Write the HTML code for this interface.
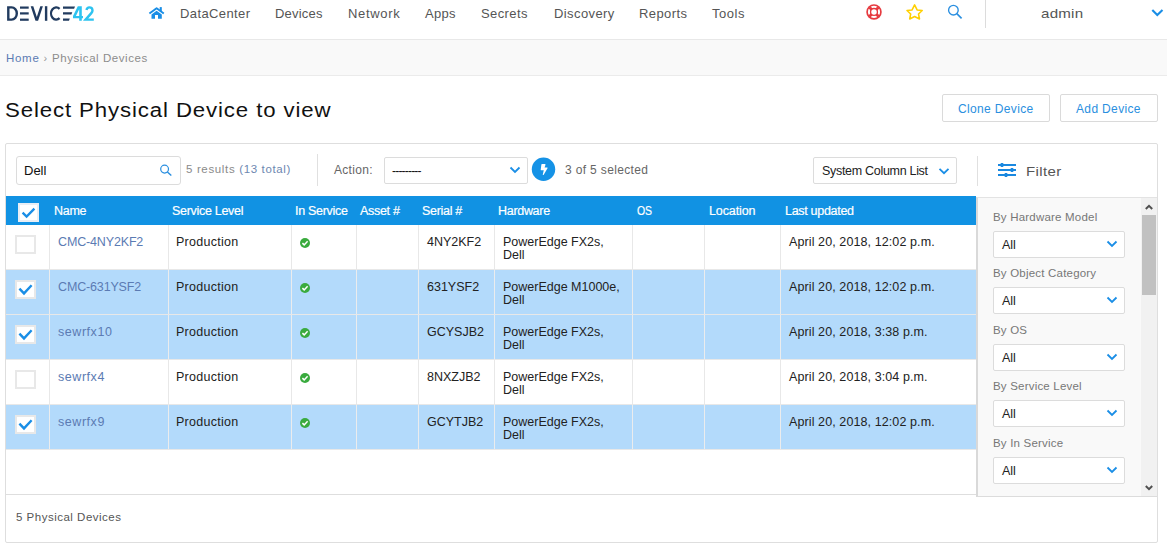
<!DOCTYPE html>
<html><head><meta charset="utf-8"><title>Physical Devices</title>
<style>
*{margin:0;padding:0;box-sizing:border-box}
html,body{width:1167px;height:549px;overflow:hidden;background:#fff;font-family:"Liberation Sans",sans-serif;color:#333}
.a{position:absolute;white-space:nowrap;line-height:16px}
.ln{position:absolute;background:#e6e6e6}
.nav{font-size:13px;color:#555;top:6px;letter-spacing:0.4px}
.cb{position:absolute;width:21px;height:19px;border:2px solid #e8e8e8;background:#fff}
.sel{position:absolute;background:#fff;border:1px solid #dcdcdc;border-radius:2px}
.flbl{font-size:11.5px;color:#777;letter-spacing:0.2px}
.th{font-size:12.5px;color:#fff;top:203px;letter-spacing:-0.3px;-webkit-text-stroke:0.2px #fff}
.td{font-size:12.5px;color:#222}
.nm{color:#5b7bb3;letter-spacing:-0.15px}
.pr{letter-spacing:0.27px}
.fall{font-size:12.5px;color:#222}
</style></head><body>

<!-- ============ HEADER ============ -->
<div class="ln" style="left:0;top:39px;width:1167px;height:1px;background:#e8e8e8"></div>
<svg class="a" style="left:0;top:0" width="100" height="30" viewBox="0 0 100 30">
  <g fill="#213b5f">
    <path d="M7.1 6.2 H11.6 A6.4 7.3 0 0 1 11.6 20.8 H7.1 Z M9.5 8.6 V18.4 H11.6 A4 4.9 0 0 0 11.6 8.6 Z" fill-rule="evenodd"/>
    <rect x="20" y="6.5" width="8.7" height="2.2"/><rect x="20" y="12.3" width="8.7" height="2.2"/><rect x="20" y="18.6" width="8.7" height="2.2"/>
    <path d="M30.7 6.2 H33.3 L36.8 16.9 L40.3 6.2 H42.9 L38.1 20.8 H35.5 Z"/>
    <rect x="44.9" y="6.2" width="2.4" height="14.6"/>
    <path d="M63 6.5 H75 L74.1 8.7 H63 Z M63 12.2 H72.3 L71.4 14.4 H63 Z M63 18.6 H69.8 L69 20.8 H63 Z"/>
  </g>
  <path d="M59.6 8.8 A5.2 6.1 0 1 0 59.6 18.2" fill="none" stroke="#213b5f" stroke-width="2.3"/>
  <g fill="#2dc3f0">
    <path d="M77.8 6.2 H81.8 V16.1 H83 V18.3 H81.8 V20.8 H79.2 V18.3 H73 V16.1 Z M79.2 9.3 V16.1 H75.9 Z" fill-rule="evenodd"/>
  </g>
  <path d="M86.5 10 C86.9 7.9 88.3 7.4 89.3 7.4 C91.2 7.4 92.5 8.6 92.5 10.5 C92.5 11.6 92 12.3 91.3 13.1 L85.6 19.6 H93.8" fill="none" stroke="#2dc3f0" stroke-width="2.4"/>
</svg>
<svg class="a" style="left:148px;top:6px" width="17" height="14" viewBox="0 0 17 14">
  <path d="M1.4 7.6 L8.6 2.2 L15.8 7.6" fill="none" stroke="#1a8ee6" stroke-width="1.9" stroke-linejoin="round"/>
  <rect x="11.7" y="1.1" width="2.1" height="4.2" fill="#1a8ee6"/>
  <path d="M3.5 8.6 L8.6 4.8 L13.8 8.6 V12.8 H10 V9 H7 V12.8 H3.5 Z" fill="#1a8ee6"/>
</svg>
<div class="a nav" style="left:180px">DataCenter</div>
<div class="a nav" style="left:275px;letter-spacing:0.2px">Devices</div>
<div class="a nav" style="left:348px;letter-spacing:0.68px">Network</div>
<div class="a nav" style="left:425px;letter-spacing:0.3px">Apps</div>
<div class="a nav" style="left:481px">Secrets</div>
<div class="a nav" style="left:554px">Discovery</div>
<div class="a nav" style="left:639px">Reports</div>
<div class="a nav" style="left:712px;letter-spacing:0.55px">Tools</div>

<svg class="a" style="left:864px;top:2px" width="20" height="20" viewBox="0 0 20 20">
  <circle cx="10" cy="9.9" r="7.75" fill="#e63a3f"/>
  <circle cx="10" cy="9.9" r="5.1" fill="none" stroke="#fff" stroke-width="2"/>
  <path d="M5.4 5.3 L14.6 14.5 M14.6 5.3 L5.4 14.5" stroke="#e63a3f" stroke-width="2.8"/>
  <circle cx="10" cy="9.9" r="2.75" fill="#fff"/>
</svg>
<svg class="a" style="left:904px;top:2px" width="22" height="20" viewBox="0 0 22 20">
  <path d="M10.6 2.9 L13.1 7.9 L18.2 8.5 L14.5 12 L15.5 17 L10.6 14.5 L5.7 17 L6.7 12 L3 8.5 L8.1 7.9 Z" fill="none" stroke="#ffd000" stroke-width="1.55" stroke-linejoin="round"/>
</svg>
<svg class="a" style="left:946px;top:3px" width="20" height="20" viewBox="0 0 20 20">
  <circle cx="7.4" cy="7.2" r="4.8" fill="none" stroke="#2a8fe0" stroke-width="1.35"/>
  <path d="M10.8 10.6 L15.6 15.4" stroke="#2a8fe0" stroke-width="1.6"/>
</svg>
<div class="ln" style="left:985px;top:0;width:1px;height:28px;background:#dcdcdc"></div>
<div class="a" style="left:1041px;top:6px;font-size:13.5px;color:#555;letter-spacing:0.2px;transform:scaleX(1.12);transform-origin:0 0">admin</div>
<svg class="a" style="left:1150px;top:7px" width="15" height="11" viewBox="0 0 15 11">
  <path d="M2.3 3 L7.3 8 L12.5 3" fill="none" stroke="#1a8ee6" stroke-width="2.1"/>
</svg>

<!-- ============ BREADCRUMB ============ -->
<div class="ln" style="left:0;top:40px;width:1167px;height:35px;background:#f9f9f9"></div>
<div class="ln" style="left:0;top:75px;width:1167px;height:1px;background:#ebebeb"></div>
<div class="a" style="left:6px;top:50px;font-size:11.5px;color:#5b7bb3;letter-spacing:0.7px">Home</div>
<div class="a" style="left:43.5px;top:50px;font-size:11px;color:#999">›</div>
<div class="a" style="left:52px;top:50px;font-size:11.5px;color:#8c8c8c;letter-spacing:0.55px">Physical Devices</div>

<!-- ============ TITLE ============ -->
<div class="a" style="left:5px;top:98px;font-size:20px;line-height:24px;color:#111;letter-spacing:0.8px;transform:scaleX(1.11);transform-origin:0 0">Select Physical Device to view</div>
<div class="sel" style="left:942px;top:94px;width:108px;height:28px;border-color:#dadada"></div>
<div class="a" style="left:958px;top:101px;font-size:12px;color:#2a8fe0;letter-spacing:0.35px">Clone Device</div>
<div class="sel" style="left:1060px;top:94px;width:98px;height:28px;border-color:#dadada"></div>
<div class="a" style="left:1076px;top:101px;font-size:12px;color:#2a8fe0;letter-spacing:0.35px">Add Device</div>

<!-- ============ PANEL ============ -->
<div style="position:absolute;left:5px;top:143px;width:1153px;height:400px;border:1px solid #dedede;border-radius:2px"></div>

<!-- toolbar -->
<div class="sel" style="left:16px;top:156px;width:165px;height:29px;border-radius:3px"></div>
<div class="a" style="left:24px;top:163px;font-size:13px;color:#111">Dell</div>
<svg class="a" style="left:158px;top:162px" width="16" height="16" viewBox="0 0 16 16">
  <circle cx="6.6" cy="7.1" r="3.9" fill="none" stroke="#2a8fe0" stroke-width="1.25"/>
  <path d="M9.4 9.9 L13.3 13.6" stroke="#2a8fe0" stroke-width="1.4"/>
</svg>
<div class="a" style="left:186px;top:161px;font-size:11.5px;color:#8a8a8a;letter-spacing:0.65px">5 results <span style="color:#6d87b0">(13 total)</span></div>
<div class="ln" style="left:317px;top:154px;width:1px;height:32px;background:#e0e0e0"></div>
<div class="a" style="left:334px;top:162px;font-size:12px;color:#666;letter-spacing:0.3px">Action:</div>
<div class="sel" style="left:384px;top:157px;width:144px;height:27px"></div>
<div class="a" style="left:392px;top:163px;font-size:12px;color:#111;letter-spacing:-0.8px">---------</div>
<svg class="a" style="left:508px;top:165px" width="14" height="11" viewBox="0 0 14 11">
  <path d="M2.5 2.5 L7 7 L11.5 2.5" fill="none" stroke="#1a8ee6" stroke-width="1.8"/>
</svg>
<svg class="a" style="left:531px;top:157px" width="25" height="25" viewBox="0 0 25 25">
  <circle cx="12.5" cy="12.2" r="11.7" fill="#1592e6"/>
  <path transform="translate(9.7 7.1) scale(0.0215)" d="M296 160H180.6l42.6-129.8C227.2 15 215.7 0 200 0H56C44 0 33.8 8.9 32.2 20.8l-32 240C-1.7 275.2 9.5 288 24 288h118.7L96.6 482.5c-3.6 15.2 8 29.5 23.3 29.5 8.4 0 16.4-4.4 20.8-12l176-304c9.3-15.9-2.2-36-20.7-36z" fill="#fff"/>
</svg>
<div class="a" style="left:565px;top:162px;font-size:12px;color:#666;letter-spacing:0.35px">3 of 5 selected</div>

<div class="sel" style="left:813px;top:157px;width:144px;height:27px"></div>
<div class="a" style="left:822px;top:163px;font-size:12.5px;color:#222;letter-spacing:-0.3px">System Column List</div>
<svg class="a" style="left:937px;top:166px" width="14" height="11" viewBox="0 0 14 11">
  <path d="M2.5 2.8 L7 7.2 L11.5 2.8" fill="none" stroke="#1a8ee6" stroke-width="1.8"/>
</svg>
<div class="ln" style="left:977px;top:156px;width:1px;height:30px;background:#e0e0e0"></div>
<svg class="a" style="left:996px;top:160px" width="22" height="20" viewBox="0 0 22 20">
  <g stroke="#1a88e0" stroke-width="2">
    <path d="M2 5 H20 M2 10 H20 M2 15 H20"/>
    <path d="M6 3 V7 M16 8 V12 M10 13 V17" stroke-width="2.6"/>
  </g>
</svg>
<div class="a" style="left:1026px;top:164px;font-size:12.5px;color:#555;letter-spacing:0.3px;transform:scaleX(1.2);transform-origin:0 0">Filter</div>

<!-- ============ TABLE ============ -->
<div class="ln" style="left:6px;top:196px;width:970px;height:29px;background:#1192e3"></div>
<div class="cb" style="left:18px;top:203px;border-color:#e8eef5"></div>
<svg class="a" style="left:18px;top:203px" width="21" height="19" viewBox="0 0 21 19"><path d="M4.6 9.6 L8.6 13.6 L16.4 5.6" fill="none" stroke="#1a8ee6" stroke-width="2.3"/></svg>
<div class="a th" style="left:54px">Name</div>
<div class="a th" style="left:172px">Service Level</div>
<div class="a th" style="left:295px">In Service</div>
<div class="a th" style="left:360px">Asset #</div>
<div class="a th" style="left:422px">Serial #</div>
<div class="a th" style="left:498px">Hardware</div>
<div class="a th" style="left:637px;transform:scaleX(0.84);transform-origin:0 0">OS</div>
<div class="a th" style="left:709px;letter-spacing:-0.1px">Location</div>
<div class="a th" style="left:785px">Last updated</div>
<div class="ln" style="left:6px;top:225px;width:970px;height:44px;background:#fff"></div>
<div class="ln" style="left:49px;top:225px;width:1px;height:44px;background:#e8e8e8"></div>
<div class="ln" style="left:168px;top:225px;width:1px;height:44px;background:#e8e8e8"></div>
<div class="ln" style="left:291px;top:225px;width:1px;height:44px;background:#e8e8e8"></div>
<div class="ln" style="left:356px;top:225px;width:1px;height:44px;background:#e8e8e8"></div>
<div class="ln" style="left:418px;top:225px;width:1px;height:44px;background:#e8e8e8"></div>
<div class="ln" style="left:494px;top:225px;width:1px;height:44px;background:#e8e8e8"></div>
<div class="ln" style="left:632px;top:225px;width:1px;height:44px;background:#e8e8e8"></div>
<div class="ln" style="left:704px;top:225px;width:1px;height:44px;background:#e8e8e8"></div>
<div class="ln" style="left:780px;top:225px;width:1px;height:44px;background:#e8e8e8"></div>
<div class="ln" style="left:6px;top:269px;width:970px;height:1px;background:#e8e8e8"></div>
<div class="cb" style="left:15px;top:235px"></div>
<div class="a td nm" style="left:58px;top:234px">CMC-4NY2KF2</div>
<div class="a td pr" style="left:176px;top:234px">Production</div>
<svg class="a" style="left:299px;top:237px" width="12" height="12" viewBox="0 0 12 12"><circle cx="6" cy="6" r="5" fill="#3aab3e"/><path d="M3.4 6.1 L5.2 7.9 L8.6 4.3" fill="none" stroke="#fff" stroke-width="1.5"/></svg>
<div class="a td" style="left:427px;top:234px">4NY2KF2</div>
<div class="a td" style="left:503px;top:234px;line-height:13px;padding-top:2px">PowerEdge FX2s,<br>Dell</div>
<div class="a td" style="letter-spacing:0.1px;left:789px;top:234px">April 20, 2018, 12:02 p.m.</div>
<div class="ln" style="left:6px;top:270px;width:970px;height:44px;background:#b3dafb"></div>
<div class="ln" style="left:49px;top:270px;width:1px;height:44px;background:#ebeced"></div>
<div class="ln" style="left:168px;top:270px;width:1px;height:44px;background:#ebeced"></div>
<div class="ln" style="left:291px;top:270px;width:1px;height:44px;background:#ebeced"></div>
<div class="ln" style="left:356px;top:270px;width:1px;height:44px;background:#ebeced"></div>
<div class="ln" style="left:418px;top:270px;width:1px;height:44px;background:#ebeced"></div>
<div class="ln" style="left:494px;top:270px;width:1px;height:44px;background:#ebeced"></div>
<div class="ln" style="left:632px;top:270px;width:1px;height:44px;background:#ebeced"></div>
<div class="ln" style="left:704px;top:270px;width:1px;height:44px;background:#ebeced"></div>
<div class="ln" style="left:780px;top:270px;width:1px;height:44px;background:#ebeced"></div>
<div class="ln" style="left:6px;top:314px;width:970px;height:1px;background:#e8e8e8"></div>
<div class="cb" style="left:15px;top:280px"></div>
<svg class="a" style="left:15px;top:280px" width="21" height="19" viewBox="0 0 21 19"><path d="M4.4 8.6 L9 13.4 L16.6 5.3" fill="none" stroke="#1a8ee6" stroke-width="2.4"/></svg>
<div class="a td nm" style="left:58px;top:279px">CMC-631YSF2</div>
<div class="a td pr" style="left:176px;top:279px">Production</div>
<svg class="a" style="left:299px;top:282px" width="12" height="12" viewBox="0 0 12 12"><circle cx="6" cy="6" r="5" fill="#3aab3e"/><path d="M3.4 6.1 L5.2 7.9 L8.6 4.3" fill="none" stroke="#fff" stroke-width="1.5"/></svg>
<div class="a td" style="left:427px;top:279px">631YSF2</div>
<div class="a td" style="left:503px;top:279px;line-height:13px;padding-top:2px">PowerEdge M1000e,<br>Dell</div>
<div class="a td" style="letter-spacing:0.1px;left:789px;top:279px">April 20, 2018, 12:02 p.m.</div>
<div class="ln" style="left:6px;top:315px;width:970px;height:44px;background:#b3dafb"></div>
<div class="ln" style="left:49px;top:315px;width:1px;height:44px;background:#ebeced"></div>
<div class="ln" style="left:168px;top:315px;width:1px;height:44px;background:#ebeced"></div>
<div class="ln" style="left:291px;top:315px;width:1px;height:44px;background:#ebeced"></div>
<div class="ln" style="left:356px;top:315px;width:1px;height:44px;background:#ebeced"></div>
<div class="ln" style="left:418px;top:315px;width:1px;height:44px;background:#ebeced"></div>
<div class="ln" style="left:494px;top:315px;width:1px;height:44px;background:#ebeced"></div>
<div class="ln" style="left:632px;top:315px;width:1px;height:44px;background:#ebeced"></div>
<div class="ln" style="left:704px;top:315px;width:1px;height:44px;background:#ebeced"></div>
<div class="ln" style="left:780px;top:315px;width:1px;height:44px;background:#ebeced"></div>
<div class="ln" style="left:6px;top:359px;width:970px;height:1px;background:#e8e8e8"></div>
<div class="cb" style="left:15px;top:325px"></div>
<svg class="a" style="left:15px;top:325px" width="21" height="19" viewBox="0 0 21 19"><path d="M4.4 8.6 L9 13.4 L16.6 5.3" fill="none" stroke="#1a8ee6" stroke-width="2.4"/></svg>
<div class="a td nm" style="letter-spacing:0.55px;left:58px;top:324px">sewrfx10</div>
<div class="a td pr" style="left:176px;top:324px">Production</div>
<svg class="a" style="left:299px;top:327px" width="12" height="12" viewBox="0 0 12 12"><circle cx="6" cy="6" r="5" fill="#3aab3e"/><path d="M3.4 6.1 L5.2 7.9 L8.6 4.3" fill="none" stroke="#fff" stroke-width="1.5"/></svg>
<div class="a td" style="left:427px;top:324px">GCYSJB2</div>
<div class="a td" style="left:503px;top:324px;line-height:13px;padding-top:2px">PowerEdge FX2s,<br>Dell</div>
<div class="a td" style="letter-spacing:0.1px;left:789px;top:324px">April 20, 2018, 3:38 p.m.</div>
<div class="ln" style="left:6px;top:360px;width:970px;height:44px;background:#fff"></div>
<div class="ln" style="left:49px;top:360px;width:1px;height:44px;background:#e8e8e8"></div>
<div class="ln" style="left:168px;top:360px;width:1px;height:44px;background:#e8e8e8"></div>
<div class="ln" style="left:291px;top:360px;width:1px;height:44px;background:#e8e8e8"></div>
<div class="ln" style="left:356px;top:360px;width:1px;height:44px;background:#e8e8e8"></div>
<div class="ln" style="left:418px;top:360px;width:1px;height:44px;background:#e8e8e8"></div>
<div class="ln" style="left:494px;top:360px;width:1px;height:44px;background:#e8e8e8"></div>
<div class="ln" style="left:632px;top:360px;width:1px;height:44px;background:#e8e8e8"></div>
<div class="ln" style="left:704px;top:360px;width:1px;height:44px;background:#e8e8e8"></div>
<div class="ln" style="left:780px;top:360px;width:1px;height:44px;background:#e8e8e8"></div>
<div class="ln" style="left:6px;top:404px;width:970px;height:1px;background:#e8e8e8"></div>
<div class="cb" style="left:15px;top:370px"></div>
<div class="a td nm" style="letter-spacing:0.55px;left:58px;top:369px">sewrfx4</div>
<div class="a td pr" style="left:176px;top:369px">Production</div>
<svg class="a" style="left:299px;top:372px" width="12" height="12" viewBox="0 0 12 12"><circle cx="6" cy="6" r="5" fill="#3aab3e"/><path d="M3.4 6.1 L5.2 7.9 L8.6 4.3" fill="none" stroke="#fff" stroke-width="1.5"/></svg>
<div class="a td" style="left:427px;top:369px">8NXZJB2</div>
<div class="a td" style="left:503px;top:369px;line-height:13px;padding-top:2px">PowerEdge FX2s,<br>Dell</div>
<div class="a td" style="letter-spacing:0.1px;left:789px;top:369px">April 20, 2018, 3:04 p.m.</div>
<div class="ln" style="left:6px;top:405px;width:970px;height:44px;background:#b3dafb"></div>
<div class="ln" style="left:49px;top:405px;width:1px;height:44px;background:#ebeced"></div>
<div class="ln" style="left:168px;top:405px;width:1px;height:44px;background:#ebeced"></div>
<div class="ln" style="left:291px;top:405px;width:1px;height:44px;background:#ebeced"></div>
<div class="ln" style="left:356px;top:405px;width:1px;height:44px;background:#ebeced"></div>
<div class="ln" style="left:418px;top:405px;width:1px;height:44px;background:#ebeced"></div>
<div class="ln" style="left:494px;top:405px;width:1px;height:44px;background:#ebeced"></div>
<div class="ln" style="left:632px;top:405px;width:1px;height:44px;background:#ebeced"></div>
<div class="ln" style="left:704px;top:405px;width:1px;height:44px;background:#ebeced"></div>
<div class="ln" style="left:780px;top:405px;width:1px;height:44px;background:#ebeced"></div>
<div class="ln" style="left:6px;top:449px;width:970px;height:1px;background:#e8e8e8"></div>
<div class="cb" style="left:15px;top:415px"></div>
<svg class="a" style="left:15px;top:415px" width="21" height="19" viewBox="0 0 21 19"><path d="M4.4 8.6 L9 13.4 L16.6 5.3" fill="none" stroke="#1a8ee6" stroke-width="2.4"/></svg>
<div class="a td nm" style="letter-spacing:0.55px;left:58px;top:414px">sewrfx9</div>
<div class="a td pr" style="left:176px;top:414px">Production</div>
<svg class="a" style="left:299px;top:417px" width="12" height="12" viewBox="0 0 12 12"><circle cx="6" cy="6" r="5" fill="#3aab3e"/><path d="M3.4 6.1 L5.2 7.9 L8.6 4.3" fill="none" stroke="#fff" stroke-width="1.5"/></svg>
<div class="a td" style="left:427px;top:414px">GCYTJB2</div>
<div class="a td" style="left:503px;top:414px;line-height:13px;padding-top:2px">PowerEdge FX2s,<br>Dell</div>
<div class="a td" style="letter-spacing:0.1px;left:789px;top:414px">April 20, 2018, 12:02 p.m.</div>


<!-- footer -->
<div class="ln" style="left:6px;top:494px;width:971px;height:1px;background:#dedede"></div>
<div class="a" style="left:16px;top:509px;font-size:11.5px;color:#555;letter-spacing:0.5px">5 Physical Devices</div>

<!-- ============ FILTER PANEL ============ -->
<div style="position:absolute;left:976px;top:197px;width:181px;height:300px;background:#f9f9f9;border-left:2px solid #d9d9d9;border-top:1px solid #e3e3e3;border-bottom:1px solid #dcdcdc"></div>
<div class="ln" style="left:1141px;top:198px;width:16px;height:298px;background:#f1f1f1"></div>
<div class="ln" style="left:1142px;top:215px;width:14px;height:80px;background:#c1c1c1"></div>
<svg class="a" style="left:1141px;top:199px" width="16" height="16" viewBox="0 0 16 16"><path d="M4.8 10 L8 6.8 L11.2 10" fill="none" stroke="#505050" stroke-width="2"/></svg>
<svg class="a" style="left:1141px;top:480px" width="16" height="16" viewBox="0 0 16 16"><path d="M4.8 6 L8 9.2 L11.2 6" fill="none" stroke="#505050" stroke-width="2"/></svg>
<div class="a flbl" style="left:993px;top:209px">By Hardware Model</div>
<div class="sel" style="left:993px;top:231px;width:132px;height:27px"></div>
<div class="a fall" style="left:1002px;top:237px">All</div>
<svg class="a" style="left:1105px;top:239px" width="14" height="11" viewBox="0 0 14 11"><path d="M2.5 2.5 L7 7 L11.5 2.5" fill="none" stroke="#1a8ee6" stroke-width="1.8"/></svg>
<div class="a flbl" style="left:993px;top:265px">By Object Category</div>
<div class="sel" style="left:993px;top:287px;width:132px;height:27px"></div>
<div class="a fall" style="left:1002px;top:293px">All</div>
<svg class="a" style="left:1105px;top:295px" width="14" height="11" viewBox="0 0 14 11"><path d="M2.5 2.5 L7 7 L11.5 2.5" fill="none" stroke="#1a8ee6" stroke-width="1.8"/></svg>
<div class="a flbl" style="left:993px;top:322px">By OS</div>
<div class="sel" style="left:993px;top:344px;width:132px;height:27px"></div>
<div class="a fall" style="left:1002px;top:350px">All</div>
<svg class="a" style="left:1105px;top:352px" width="14" height="11" viewBox="0 0 14 11"><path d="M2.5 2.5 L7 7 L11.5 2.5" fill="none" stroke="#1a8ee6" stroke-width="1.8"/></svg>
<div class="a flbl" style="left:993px;top:378px">By Service Level</div>
<div class="sel" style="left:993px;top:400px;width:132px;height:27px"></div>
<div class="a fall" style="left:1002px;top:406px">All</div>
<svg class="a" style="left:1105px;top:408px" width="14" height="11" viewBox="0 0 14 11"><path d="M2.5 2.5 L7 7 L11.5 2.5" fill="none" stroke="#1a8ee6" stroke-width="1.8"/></svg>
<div class="a flbl" style="left:993px;top:435px">By In Service</div>
<div class="sel" style="left:993px;top:457px;width:132px;height:27px"></div>
<div class="a fall" style="left:1002px;top:463px">All</div>
<svg class="a" style="left:1105px;top:465px" width="14" height="11" viewBox="0 0 14 11"><path d="M2.5 2.5 L7 7 L11.5 2.5" fill="none" stroke="#1a8ee6" stroke-width="1.8"/></svg>
</body></html>
